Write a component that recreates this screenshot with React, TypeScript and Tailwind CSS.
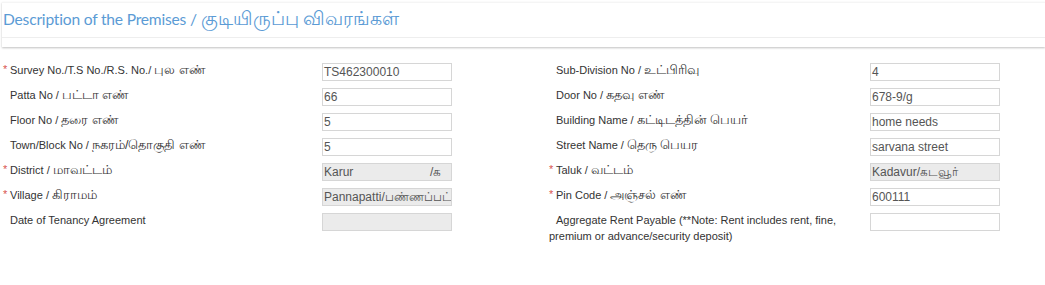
import React from "react";

type Field = { en: string; ta?: string; req?: boolean; value: string; disabled?: boolean; wrap?: boolean };

const left: Field[] = [
  { en: "Survey No./T.S No./R.S. No./ ", ta: "புல எண்", req: true, value: "TS462300010" },
  { en: "Patta No / ", ta: "பட்டா எண்", value: "66" },
  { en: "Floor No / ", ta: "தரை எண்", value: "5" },
  { en: "Town/Block No / ", ta: "நகரம்/தொகுதி எண்", value: "5" },
  { en: "District / ", ta: "மாவட்டம்", req: true, value: "Karur                       /க", disabled: true },
  { en: "Village / ", ta: "கிராமம்", req: true, value: "Pannapatti/பண்ணப்பட்டி", disabled: true },
  { en: "Date of Tenancy Agreement", value: "", disabled: true },
];

const right: Field[] = [
  { en: "Sub-Division No / ", ta: "உட்பிரிவு", value: "4" },
  { en: "Door No / ", ta: "கதவு எண்", value: "678-9/g" },
  { en: "Building Name / ", ta: "கட்டிடத்தின் பெயர்", value: "home needs" },
  { en: "Street Name / ", ta: "தெரு பெயர", value: "sarvana street" },
  { en: "Taluk / ", ta: "வட்டம்", req: true, value: "Kadavur/கடவூர்", disabled: true },
  { en: "Pin Code / ", ta: "அஞ்சல் எண்", req: true, value: "600111" },
  { en: "Aggregate Rent Payable (**Note: Rent includes rent, fine, premium or advance/security deposit)", value: "", wrap: true },
];

function Input({ f }: { f: Field }) {
  return (
    <div
      className={`h-[18px] w-[130px] border border-[#d6d6d6] overflow-hidden whitespace-pre px-[1px] text-[12px] leading-[16px] text-[#555] ${
        f.disabled ? "bg-[#ebebeb]" : "bg-white"
      }`}
    >
      {f.value}
    </div>
  );
}

function Label({ f, width, indent }: { f: Field; width: string; indent: string }) {
  return (
    <div className={`${width} text-[11px] leading-[16px] text-[#333] ${indent}`}>
      {f.wrap ? (
        <span className="block -ml-[7px] indent-[7px]">{f.en}</span>
      ) : (
        <span className="relative block whitespace-nowrap">
          {f.req && <span className="absolute -left-[7px] top-[-1px] text-[#d9534f] text-[11px]">*</span>}
          {f.en}
          {f.ta && <span className="text-[12.5px]">{f.ta}</span>}
        </span>
      )}
    </div>
  );
}

export default function App() {
  const sans = { fontFamily: '"Liberation Sans", Arial, "Noto Sans", sans-serif' };
  return (
    <div className="w-[1045px] h-[285px] bg-white overflow-hidden" style={sans}>
      <div className="pt-[2px] pl-[2px]">
        <div className="bg-white border-t border-[#f5f5f5] shadow-[0_1px_2px_rgba(0,0,0,0.25)] h-[45px]">
          <div
            className="h-[35px] border-b border-[#eeeeee] pl-[1px] pt-[2px] text-[#5b9bd5] whitespace-nowrap"
            style={{ fontFamily: 'Lato, "Open Sans", sans-serif' }}
          >
            <span className="text-[15.6px] tracking-[-0.2px]">Description of the Premises / </span>
            <span className="text-[18.5px]">குடியிருப்பு விவரங்கள்</span>
          </div>
        </div>
      </div>
      <div className="flex pt-[16px]">
        <div className="flex flex-col">
          {left.map((f, i) => (
            <div key={i} className="flex h-[25px]">
              <Label f={f} width="w-[312px]" indent="ml-[10px] mt-[-1px]" />
              <Input f={f} />
            </div>
          ))}
        </div>
        <div className="flex flex-col ml-[97px]">
          {right.map((f, i) => (
            <div key={i} className="flex h-[25px]">
              <Label f={f} width="w-[314px]" indent="ml-[7px] pr-[22px] mt-[-1px]" />
              <Input f={f} />
            </div>
          ))}
        </div>
      </div>
    </div>
  );
}
